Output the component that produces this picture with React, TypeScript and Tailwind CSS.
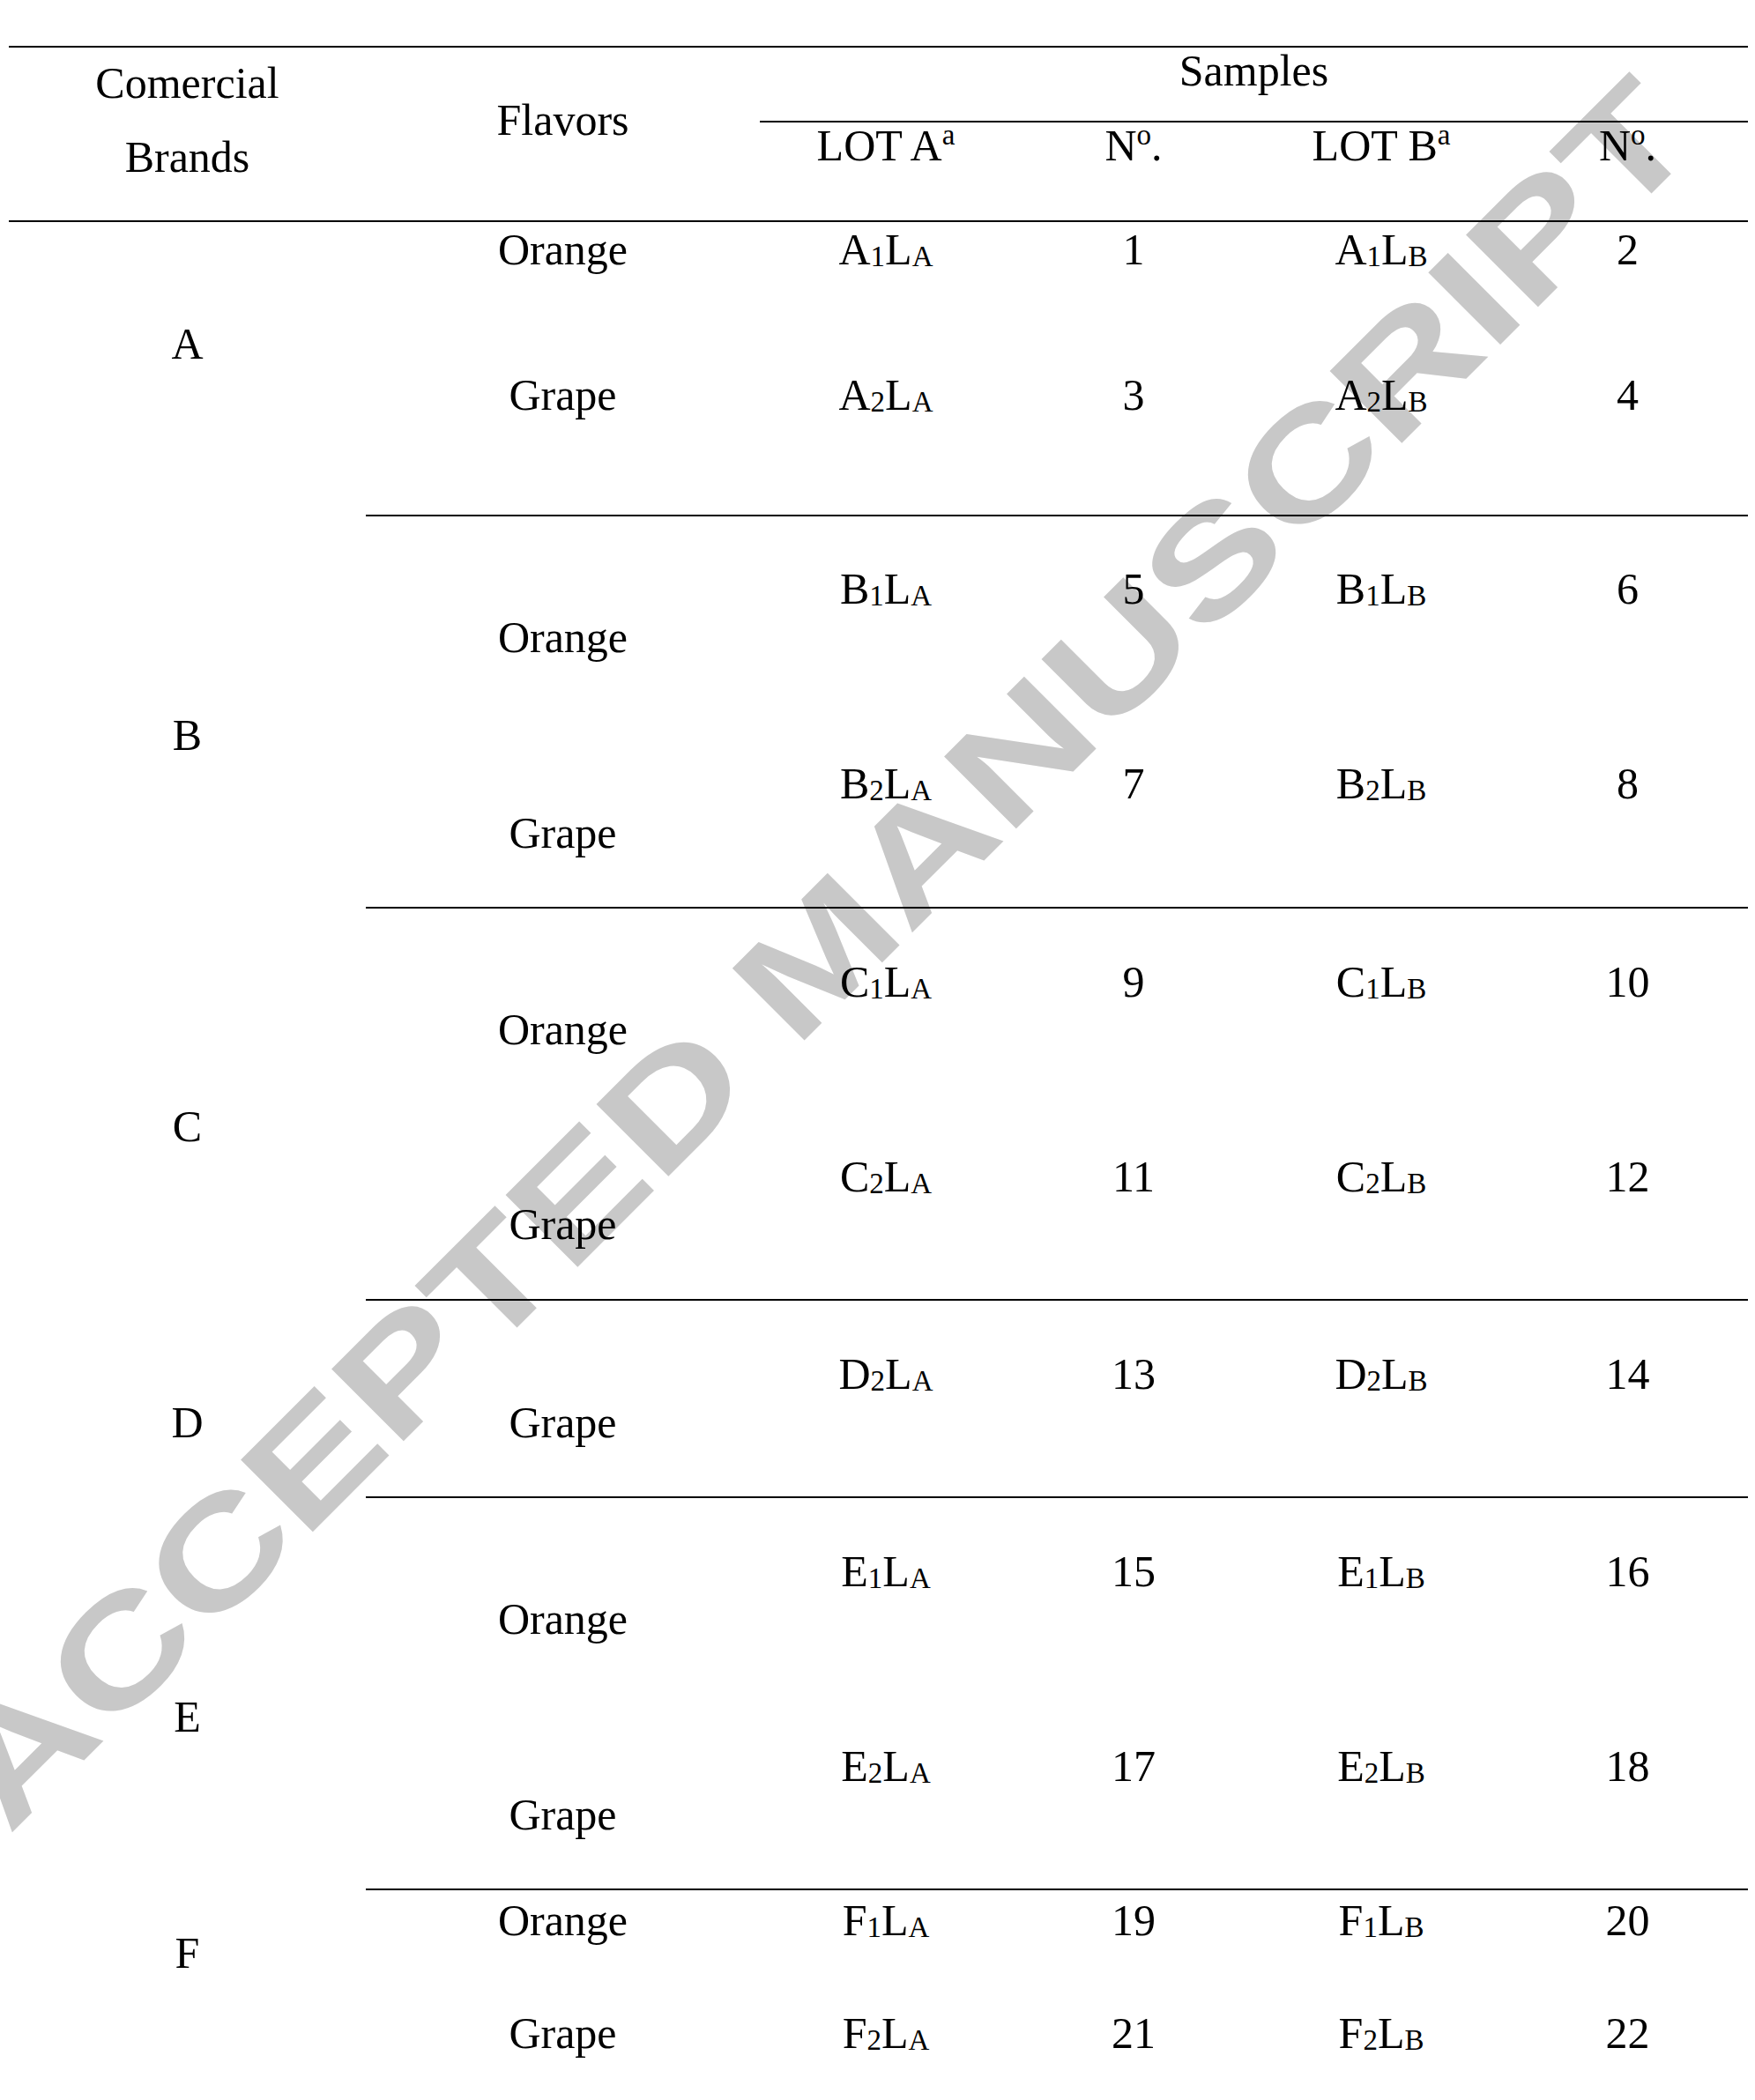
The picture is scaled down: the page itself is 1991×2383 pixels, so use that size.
const cols = "grid grid-cols-[405px_447px_286px_276px_286px_273px]";
const dataCols = "grid grid-cols-[286px_276px_286px_273px]";
const line = "h-[56px] leading-[56px] whitespace-nowrap text-center";

type Row = { i: number; a: number; b: number; mt: string };
type Group = {
  brand: string;
  h: string;
  brandMt: string;
  flavors: { name: string; mt: string }[];
  rows: Row[];
};

const groups: Group[] = [
  {
    brand: "A",
    h: "h-[332px]",
    brandMt: "mt-[110px]",
    flavors: [
      { name: "Orange", mt: "mt-[3px]" },
      { name: "Grape", mt: "mt-[109px]" },
    ],
    rows: [
      { i: 1, a: 1, b: 2, mt: "mt-[3px]" },
      { i: 2, a: 3, b: 4, mt: "mt-[109px]" },
    ],
  },
  {
    brand: "B",
    h: "h-[443px]",
    brandMt: "mt-[220px]",
    flavors: [
      { name: "Orange", mt: "mt-[109px]" },
      { name: "Grape", mt: "mt-[166px]" },
    ],
    rows: [
      { i: 1, a: 5, b: 6, mt: "mt-[54px]" },
      { i: 2, a: 7, b: 8, mt: "mt-[165px]" },
    ],
  },
  {
    brand: "C",
    h: "h-[443px]",
    brandMt: "mt-[219px]",
    flavors: [
      { name: "Orange", mt: "mt-[109px]" },
      { name: "Grape", mt: "mt-[165px]" },
    ],
    rows: [
      { i: 1, a: 9, b: 10, mt: "mt-[55px]" },
      { i: 2, a: 11, b: 12, mt: "mt-[165px]" },
    ],
  },
  {
    brand: "D",
    h: "h-[222px]",
    brandMt: "mt-[110px]",
    flavors: [{ name: "Grape", mt: "mt-[110px]" }],
    rows: [{ i: 2, a: 13, b: 14, mt: "mt-[55px]" }],
  },
  {
    brand: "E",
    h: "h-[443px]",
    brandMt: "mt-[220px]",
    flavors: [
      { name: "Orange", mt: "mt-[109px]" },
      { name: "Grape", mt: "mt-[166px]" },
    ],
    rows: [
      { i: 1, a: 15, b: 16, mt: "mt-[55px]" },
      { i: 2, a: 17, b: 18, mt: "mt-[165px]" },
    ],
  },
  {
    brand: "F",
    h: "h-[238px]",
    brandMt: "mt-[43px]",
    flavors: [
      { name: "Orange", mt: "mt-[6px]" },
      { name: "Grape", mt: "mt-[72px]" },
    ],
    rows: [
      { i: 1, a: 19, b: 20, mt: "mt-[6px]" },
      { i: 2, a: 21, b: 22, mt: "mt-[72px]" },
    ],
  },
];

function Code({ brand, i, lot }: { brand: string; i: number; lot: string }) {
  return (
    <span>
      {brand}
      <sub className="bottom-[-2px] text-[33px]">{i}</sub>L
      <sub className="bottom-[-2px] text-[33px]">{lot}</sub>
    </span>
  );
}

function Sup({ children }: { children: string }) {
  return <sup className="top-[-18px] text-[33px]">{children}</sup>;
}

function Header() {
  return (
    <div className={`${cols} h-[196px]`}>
      <div className="flex flex-col">
        <div className={`${line} mt-[12px]`}>Comercial</div>
        <div className={`${line} mt-[28px]`}>Brands</div>
      </div>
      <div className={`${line} mt-[54px]`}>Flavors</div>
      <div className="col-span-4 flex flex-col">
        <div className="h-[83px] text-center leading-[52px]">Samples</div>
        <div className="h-[2px] bg-black" />
        <div className={`${dataCols} leading-[52px]`}>
          <div className="text-center">
            LOT A<Sup>a</Sup>
          </div>
          <div className="text-center">
            N<Sup>o</Sup>.
          </div>
          <div className="text-center">
            LOT B<Sup>a</Sup>
          </div>
          <div className="text-center">
            N<Sup>o</Sup>.
          </div>
        </div>
      </div>
    </div>
  );
}

function BrandGroup({ group }: { group: Group }) {
  return (
    <div className={`${cols} ${group.h}`}>
      <div className="flex flex-col">
        <div className={`${line} ${group.brandMt}`}>{group.brand}</div>
      </div>
      <div className="flex flex-col">
        {group.flavors.map((f) => (
          <div key={f.name} className={`${line} ${f.mt}`}>
            {f.name}
          </div>
        ))}
      </div>
      <div className="col-span-4 flex flex-col">
        {group.rows.map((r) => (
          <div key={r.a} className={`${dataCols} ${line} ${r.mt}`}>
            <div>
              <Code brand={group.brand} i={r.i} lot="A" />
            </div>
            <div>{r.a}</div>
            <div>
              <Code brand={group.brand} i={r.i} lot="B" />
            </div>
            <div>{r.b}</div>
          </div>
        ))}
      </div>
    </div>
  );
}

export default function App() {
  return (
    <div className="relative h-[2383px] w-[1991px] overflow-hidden bg-white font-['Liberation_Serif','Times_New_Roman',serif] text-[50px] text-black">
      {/* watermark */}
      <div className="pointer-events-none absolute left-[10px] top-[1941px] origin-[0_142px] -rotate-45 scale-x-[1.3] whitespace-nowrap font-['Liberation_Sans',Arial,sans-serif] text-[168px] font-bold leading-none text-[#c8c8c8] select-none">
        ACCEPTED MANUSCRIPT
      </div>

      <div className="relative ml-[10px] w-[1973px] pt-[52px]">
        <div className="h-[2px] bg-black" />
        <Header />
        <div className="h-[2px] bg-black" />
        {groups.map((g, idx) => (
          <div key={g.brand}>
            {idx > 0 && <div className="ml-[405px] h-[2px] bg-black" />}
            <BrandGroup group={g} />
          </div>
        ))}
      </div>
    </div>
  );
}
